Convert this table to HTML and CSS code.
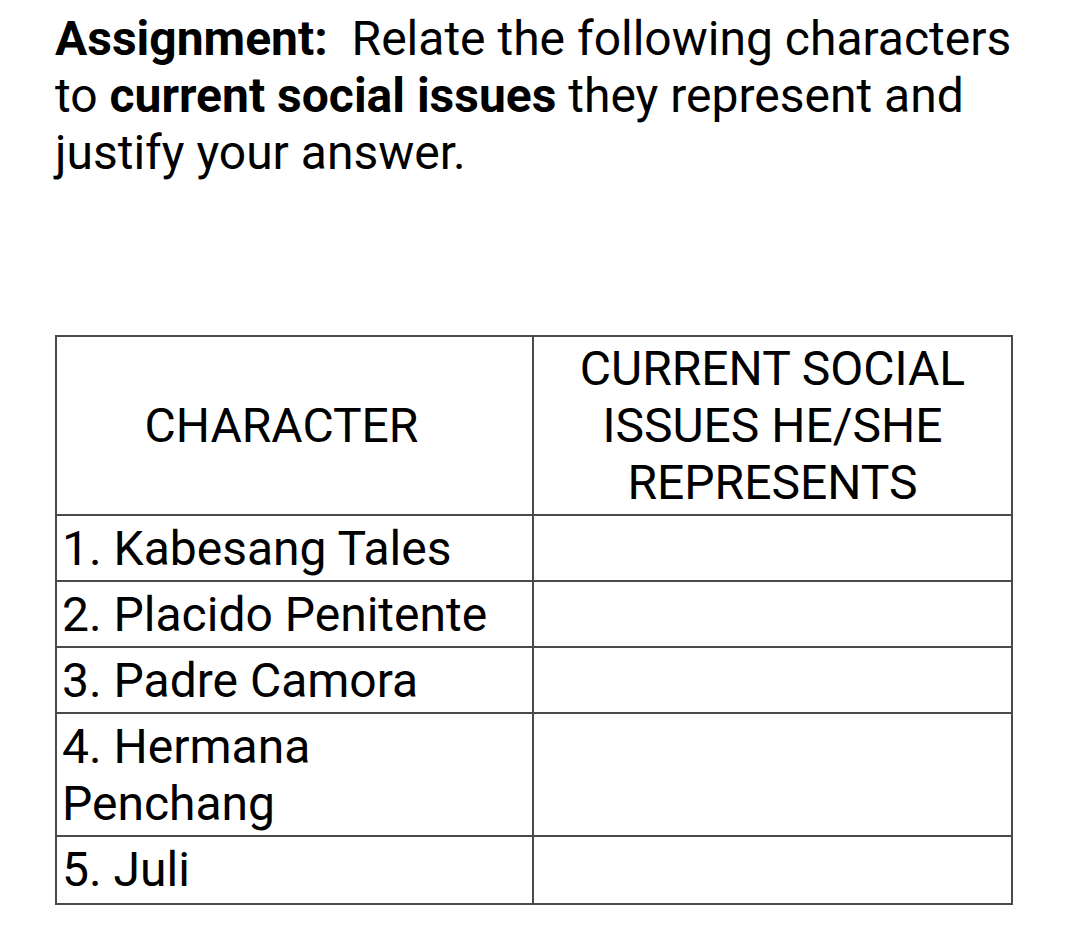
FILE: index.html
```html
<!DOCTYPE html>
<html lang="en">
<head>
<meta charset="utf-8">
<title>Assignment</title>
<link rel="stylesheet" href="styles.css">
</head>
<body>
<div class="page">
  <p class="prompt"><b>Assignment:</b>&nbsp; Relate the following characters to <b>current social issues</b> they represent and justify your answer.</p>
  <table class="sheet">
    <colgroup>
      <col class="col-char">
      <col class="col-issue">
    </colgroup>
    <thead>
      <tr>
        <th class="head-char">CHARACTER</th>
        <th>CURRENT SOCIAL<br>ISSUES HE/SHE<br>REPRESENTS</th>
      </tr>
    </thead>
    <tbody>
      <tr><td>1. Kabesang Tales</td><td></td></tr>
      <tr><td>2. Placido Penitente</td><td></td></tr>
      <tr><td>3. Padre Camora</td><td></td></tr>
      <tr><td>4. Hermana<br>Penchang</td><td></td></tr>
      <tr class="last"><td>5. Juli</td><td></td></tr>
    </tbody>
  </table>
</div>
</body>
</html>
```

FILE: styles.css
```css
html, body {
  margin: 0;
  background: #ffffff;
}

.page {
  padding: 10px 0 0 55px;
  font-family: Roboto, "Liberation Sans", sans-serif;
  color: #000;
}

.prompt {
  margin: 0;
  width: 985px;
  font-size: 48px;
  line-height: 57px;
}

.prompt b {
  font-weight: 700;
}

.sheet {
  margin-top: 154px;
  width: 958px;
  border-collapse: collapse;
  font-size: 48px;
  line-height: 57px;
  table-layout: fixed;
}

.col-char {
  width: 477px;
}

.sheet th,
.sheet td {
  border: 2px solid #4a4a4a;
  padding: 4px 5px 3px;
  vertical-align: middle;
}

.sheet th {
  font-weight: 400;
  text-align: center;
  padding: 3px 5px;
}

.sheet th.head-char {
  padding-right: 31px;
}

.sheet td {
  text-align: left;
}

.sheet tr.last td {
  padding-bottom: 5px;
}
```
